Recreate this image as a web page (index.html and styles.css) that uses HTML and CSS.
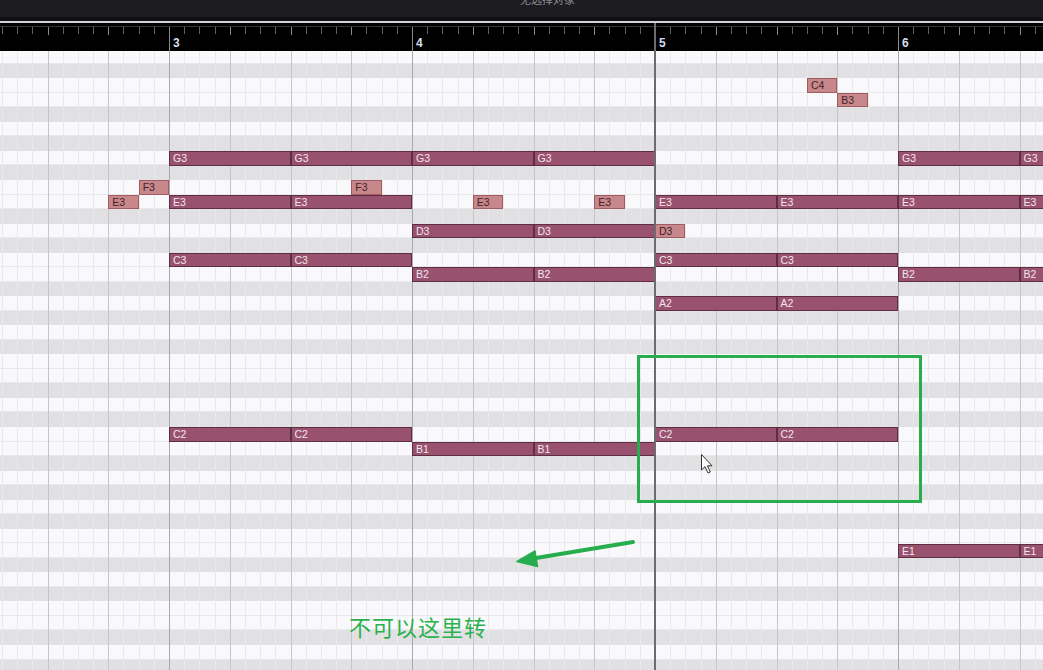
FILE: index.html
```html
<!DOCTYPE html>
<html lang="zh">
<head>
<meta charset="UTF-8">
<meta name="viewport" content="width=device-width, initial-scale=1.0">
<title>Key Editor</title>
<link rel="stylesheet" href="styles.css">
</head>
<body>

<div class="titlebar">
  <span class="title">无选择对象</span>
</div>

<!-- timeline ruler -->
<div class="ruler">
  <div class="ticks"></div>
  <span class="bar-num" style="--bar:0">3</span>
  <span class="bar-num" style="--bar:1">4</span>
  <span class="bar-num" style="--bar:2">5</span>
  <span class="bar-num" style="--bar:3">6</span>
</div>

<div class="roll">
  <div class="rows">
    <div class="row"></div><div class="row key"></div><div class="row"></div><div class="row"></div>
    <div class="row key"></div><div class="row"></div><div class="row key"></div><div class="row"></div>
    <div class="row key"></div><div class="row"></div><div class="row"></div><div class="row key"></div>

    <div class="row"></div><div class="row key"></div><div class="row"></div><div class="row"></div>
    <div class="row key"></div><div class="row"></div><div class="row key"></div><div class="row"></div>
    <div class="row key"></div><div class="row"></div><div class="row"></div><div class="row key"></div>

    <div class="row"></div><div class="row key"></div><div class="row"></div><div class="row"></div>
    <div class="row key"></div><div class="row"></div><div class="row key"></div><div class="row"></div>
    <div class="row key"></div><div class="row"></div><div class="row"></div><div class="row key"></div>

    <div class="row"></div><div class="row key"></div><div class="row"></div><div class="row"></div>
    <div class="row key"></div><div class="row"></div><div class="row key"></div>
  </div>
  <div class="lines"></div>

  <!-- notes: --n pitch row, --b start beat from bar 3, --d length in beats -->
  <div class="note short" style="--n:2;--b:10.5;--d:0.5">C4</div>
  <div class="note short" style="--n:3;--b:11;--d:0.5">B3</div>

  <div class="note" style="--n:7;--b:0;--d:2">G3</div>
  <div class="note" style="--n:7;--b:2;--d:2">G3</div>
  <div class="note" style="--n:7;--b:4;--d:2">G3</div>
  <div class="note" style="--n:7;--b:6;--d:2">G3</div>
  <div class="note" style="--n:7;--b:12;--d:2">G3</div>
  <div class="note" style="--n:7;--b:14;--d:2">G3</div>

  <div class="note short" style="--n:9;--b:-0.5;--d:0.5">F3</div>
  <div class="note short" style="--n:9;--b:3;--d:0.5">F3</div>

  <div class="note short" style="--n:10;--b:-1;--d:0.5">E3</div>
  <div class="note short" style="--n:10;--b:5;--d:0.5">E3</div>
  <div class="note short" style="--n:10;--b:7;--d:0.5">E3</div>
  <div class="note" style="--n:10;--b:0;--d:2">E3</div>
  <div class="note" style="--n:10;--b:2;--d:2">E3</div>
  <div class="note" style="--n:10;--b:8;--d:2">E3</div>
  <div class="note" style="--n:10;--b:10;--d:2">E3</div>
  <div class="note" style="--n:10;--b:12;--d:2">E3</div>
  <div class="note" style="--n:10;--b:14;--d:2">E3</div>

  <div class="note" style="--n:12;--b:4;--d:2">D3</div>
  <div class="note" style="--n:12;--b:6;--d:2">D3</div>
  <div class="note short" style="--n:12;--b:8;--d:0.5">D3</div>

  <div class="note" style="--n:14;--b:0;--d:2">C3</div>
  <div class="note" style="--n:14;--b:2;--d:2">C3</div>
  <div class="note" style="--n:14;--b:8;--d:2">C3</div>
  <div class="note" style="--n:14;--b:10;--d:2">C3</div>

  <div class="note" style="--n:15;--b:4;--d:2">B2</div>
  <div class="note" style="--n:15;--b:6;--d:2">B2</div>
  <div class="note" style="--n:15;--b:12;--d:2">B2</div>
  <div class="note" style="--n:15;--b:14;--d:2">B2</div>

  <div class="note" style="--n:17;--b:8;--d:2">A2</div>
  <div class="note" style="--n:17;--b:10;--d:2">A2</div>

  <div class="note" style="--n:26;--b:0;--d:2">C2</div>
  <div class="note" style="--n:26;--b:2;--d:2">C2</div>
  <div class="note" style="--n:26;--b:8;--d:2">C2</div>
  <div class="note" style="--n:26;--b:10;--d:2">C2</div>

  <div class="note" style="--n:27;--b:4;--d:2">B1</div>
  <div class="note" style="--n:27;--b:6;--d:2">B1</div>

  <div class="note" style="--n:34;--b:12;--d:2">E1</div>
  <div class="note" style="--n:34;--b:14;--d:2">E1</div>
</div>

<div class="playhead"></div>

<!-- annotation drawn over the editor -->
<svg class="markup" xmlns="http://www.w3.org/2000/svg" viewBox="0 0 1043 670">
  <rect x="638.5" y="356.5" width="282" height="145" fill="none" stroke="#27ad4d" stroke-width="3"/>
  <line x1="633" y1="542" x2="530" y2="559" stroke="#27ad4d" stroke-width="4" stroke-linecap="round"/>
  <path d="M517 561.5 L535 551 L537.5 566.5 Z" fill="#27ad4d" stroke="#27ad4d" stroke-width="1.5" stroke-linejoin="round"/>
  <path class="cursor" d="M701.5 454.5 L701.5 470 L705 466.6 L708 473 L710.3 472 L707.4 465.8 L712 465.8 Z"/>
</svg>
<div class="note-text">不可以这里转</div>

</body>
</html>
```

FILE: styles.css
```css
body {
  margin: 0;
  height: 670px;
  overflow: hidden;
  position: relative;
  display: flex;
  flex-direction: column;
  background-color: #f9f9fb;
  font-family: "Liberation Sans", Arial, sans-serif;
}
.titlebar {
  height: 17px;
  flex-shrink: 0;
  background-color: #1c1c21;
  border-bottom: 4px solid #111114;
  overflow: hidden;
}
.title {
  display: block;
  margin: -6px 0 0 520px;
  font-family: "Noto Sans CJK SC", sans-serif;
  font-size: 11px;
  line-height: 11px;
  color: #8c8c90;
}
.ruler {
  position: relative;
  height: 28px;
  flex-shrink: 0;
  background-color: #000;
  border-top: 2px solid #d4d4d7;
  background-image: linear-gradient(to right, #8a8a8e 0 1px, transparent 1px);
  background-size: 243px 100%;
  background-position: 169px 4px;
  background-repeat: repeat-x;
}
.ticks {
  margin-top: 3px;
  height: 9px;
  background-image:
    linear-gradient(#303034, #303034),
    repeating-linear-gradient(to right, #85858a 0 1px, transparent 1px 60.75px),
    repeating-linear-gradient(to right, #606064 0 1px, transparent 1px 15.1875px);
  background-size: 100% 1px, 243px 9px, 243px 8px;
  background-position: 0 0, 169px 0, 169px 0;
  background-repeat: no-repeat, repeat-x, repeat-x;
}
.bar-num {
  position: absolute;
  left: calc(173px + var(--bar) * 243px);
  top: 13px;
  font-size: 12px;
  font-weight: bold;
  line-height: 14px;
  color: #d4def0;
}
.roll {
  position: relative;
  flex: 1;
  overflow: hidden;
}
.rows {
  margin-top: -1.8px;
}
.row {
  height: 14.54px;
  box-sizing: border-box;
  background-color: #f9f9fb;
  border-bottom: 1px solid #e9e9ec;
}
.row.key {
  background-color: #e1e0e3;
  border-bottom-color: #e1e0e3;
}
.lines {
  position: absolute;
  top: 0;
  left: 0;
  right: 0;
  bottom: 0;
  background-image:
    linear-gradient(to right, #a9a9ad 0 1px, transparent 1px),
    repeating-linear-gradient(to right, #c6c6c9 0 1px, transparent 1px 60.75px),
    repeating-linear-gradient(to right, #e9e9ec 0 1px, transparent 1px 15.1875px);
  background-size: 243px 100%;
  background-position: 169px 0;
  background-repeat: repeat-x;
}
.note {
  position: absolute;
  top: calc(var(--n) * 14.54px - 1.8px);
  left: calc(169px + var(--b) * 60.75px);
  width: calc(var(--d) * 60.75px);
  height: 14.54px;
  box-sizing: border-box;
  padding-left: 3px;
  background-color: #98526f;
  border: 1px solid #5e2d44;
  font-size: 10.5px;
  line-height: 12px;
  color: #f4e6ec;
  overflow: hidden;
  white-space: nowrap;
}
.note.short {
  background-color: #c8878a;
  border-color: #a05c62;
  color: #432329;
}
.playhead {
  position: absolute;
  top: 23px;
  bottom: 0;
  left: 653.5px;
  width: 2px;
  background-color: #6c6c70;
}
.markup {
  position: absolute;
  top: 0;
  left: 0;
  width: 1043px;
  height: 670px;
  pointer-events: none;
}
.cursor {
  fill: #fff;
  stroke: #333;
  stroke-width: 1;
  stroke-linejoin: round;
}
.note-text {
  position: absolute;
  left: 349px;
  top: 611px;
  font-family: "Noto Sans CJK SC", sans-serif;
  font-size: 22px;
  line-height: 30px;
  letter-spacing: 1px;
  color: #2ab24e;
}
```
